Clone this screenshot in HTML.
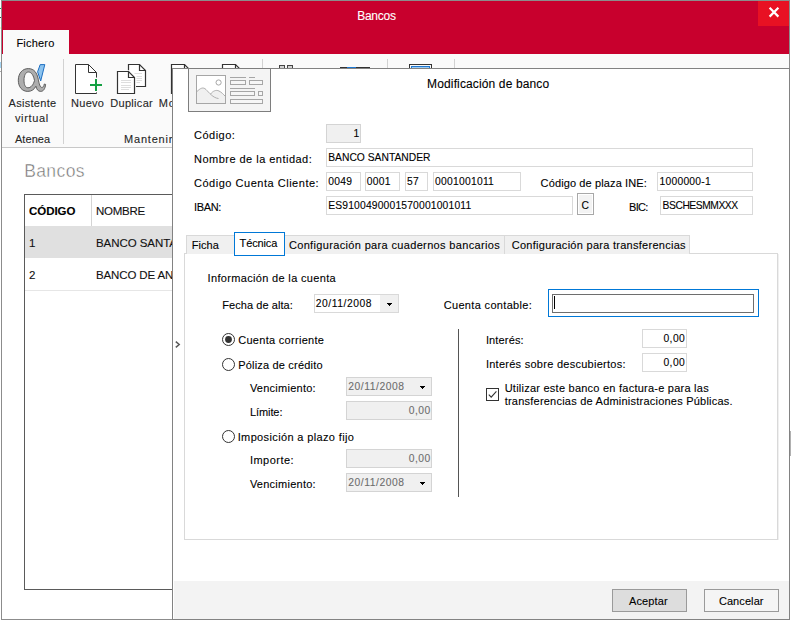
<!DOCTYPE html>
<html lang="es">
<head>
<meta charset="utf-8">
<title>Bancos</title>
<style>
html,body{margin:0;padding:0;}
body{width:791px;height:621px;overflow:hidden;background:#fff;position:relative;font-family:"Liberation Sans",sans-serif;}
.a{position:absolute;box-sizing:border-box;}
.t{position:absolute;white-space:nowrap;line-height:16px;font-family:"Liberation Sans",sans-serif;-webkit-text-stroke:0.1px currentColor;}
.f{position:absolute;box-sizing:border-box;border:1px solid #d9d9d9;background:#fff;}
.fd{position:absolute;box-sizing:border-box;border:1px solid #d4d4d4;background:#f0f0f0;}
.vs{position:absolute;width:1px;background:#d2d2d2;}
svg{position:absolute;overflow:visible;}
</style>
</head>
<body>
<!-- ===== main window ===== -->
<div class="a" id="frame" style="left:1px;top:0;width:789px;height:620px;border:1px solid #8c8c8c;"></div>
<div class="a" style="left:0;top:8px;width:1px;height:1px;background:#12a455;"></div>
<div class="a" style="left:0;top:17px;width:1px;height:1px;background:#444;"></div>
<div class="a" style="left:0;top:27px;width:1px;height:2px;background:#fbf3c4;"></div>
<div class="a" style="left:0;top:62px;width:1px;height:6px;background:#a6d6f4;"></div>
<div class="a" style="left:0;top:71px;width:1px;height:1px;background:#aaa;"></div>
<div class="a" id="titlebar" style="left:2px;top:1px;width:787px;height:53px;background:#c8002d;"></div>
<div class="a" id="closebtn" style="left:758px;top:1px;width:31px;height:25px;background:#e81123;"></div>
<svg style="left:758px;top:1px" width="31" height="25" viewBox="0 0 31 25"><path d="M11.6 6.8 L20.4 15.6 M20.4 6.8 L11.6 15.6" stroke="#fff" stroke-width="2.2" fill="none"/></svg>
<div class="a" id="ribbontab" style="left:3px;top:30px;width:66px;height:25px;background:#fafafa;"></div>
<div class="a" id="ribbon" style="left:2px;top:54px;width:787px;height:93px;background:#fafafa;"></div>
<div class="a" style="left:2px;top:147px;width:787px;height:1px;background:#c8c8c8;"></div>
<div class="vs" style="left:63px;top:59px;height:85px;"></div>
<div class="vs" style="left:262px;top:59px;height:85px;"></div>
<div class="vs" style="left:387px;top:59px;height:85px;"></div>
<div class="vs" style="left:454px;top:59px;height:85px;"></div>

<!-- ribbon icons -->
<svg id="ic-alpha" style="left:8px;top:56px" width="50" height="42" viewBox="8 56 50 42">
  <path d="M40.2 64.6 L44.8 64.6 L40.7 81.0 L37.6 71.8 Z" fill="#8cc3ee" stroke="#1e6fc2" stroke-width="1" stroke-linejoin="round"/>
  <path fill-rule="evenodd" fill="#adadad" stroke="#5e5e5e" stroke-width="1" stroke-linejoin="round"
   d="M28.3 68.6 C34.2 68.6 37.0 72.8 38.3 79.3 C39.1 83.6 40.0 87.4 41.8 87.4 C43.3 87.4 44.0 86.0 44.3 84.0 L45.6 84.4 C45.2 88.5 43.6 91.4 40.7 91.4 C37.9 91.4 36.6 89.2 35.9 86.2 C34.3 89.4 31.6 91.4 27.8 91.4 C22.1 91.4 18.3 86.9 18.3 80.2 C18.3 73.4 22.4 68.6 28.3 68.6 Z
      M28.4 72.0 C25.6 72.0 24.0 75.6 24.0 80.2 C24.0 84.8 25.4 87.8 28.0 87.8 C31.0 87.8 33.4 84.6 34.5 80.6 C33.7 75.8 31.6 72.0 28.4 72.0 Z"/>
</svg>
<svg id="ic-nuevo" style="left:70px;top:60px" width="40" height="40" viewBox="70 60 40 40">
  <path d="M75.5 64.5 H88.5 L96.5 72.5 V93.5 H75.5 Z" fill="#fff" stroke="#333" stroke-width="1"/>
  <path d="M88.5 64.5 V72.5 H96.5" fill="none" stroke="#333" stroke-width="1"/>
  <path d="M96 77.6 V92.4" stroke="#fcfcfc" stroke-width="3.4" fill="none"/>
  <path d="M96 79 V91 M90 85 H102" stroke="#14a042" stroke-width="2" fill="none"/>
</svg>
<svg id="ic-dup" style="left:112px;top:60px" width="40" height="40" viewBox="112 60 40 40">
  <path d="M128.5 64.5 H139.5 L145.5 70.5 V86.5 H128.5 Z" fill="#fff" stroke="none"/>
  <path d="M128.5 70.5 V64.5 H139.5 L145.5 70.5 V86.5 H136" fill="none" stroke="#333" stroke-width="1.2"/>
  <path d="M139.5 64.5 V70.5 H145.5" fill="none" stroke="#333" stroke-width="1.2"/>
  <path d="M134.5 73.5 H142 M136.5 76.5 H142 M136.5 78.5 H142 M136.5 80.5 H142 M136.5 82.5 H140" stroke="#dedede" stroke-width="1"/>
  <path d="M116.5 70.5 H129 L135.5 77 V94.5 H116.5 Z" fill="#fafafa" stroke="none"/>
  <path d="M117.5 71.5 H128.5 L134.5 77.5 V93.5 H117.5 Z" fill="#fff" stroke="#333" stroke-width="1.2"/>
  <path d="M128.5 71.5 V77.5 H134.5" fill="none" stroke="#333" stroke-width="1.2"/>
  <path d="M121 80.5 H131 M121 82.5 H131 M121 85.5 H131 M121 87.5 H131 M121 89.5 H129" stroke="#dedede" stroke-width="1"/>
</svg>
<svg id="ic-peek" style="left:165px;top:60px" width="300" height="40" viewBox="165 60 300 40">
  <!-- Modificar doc -->
  <path d="M171.5 64.5 H184.5 L191.5 71.5 V93.5 H171.5 Z" fill="#fff" stroke="#333" stroke-width="1.2"/>
  <path d="M184.5 64.5 V71.5 H191.5" fill="none" stroke="#333" stroke-width="1.2"/>
  <!-- Eliminar doc -->
  <path d="M222.5 64.5 H235.5 L242.5 71.5 V93.5 H222.5 Z" fill="#fff" stroke="#333" stroke-width="1.2"/>
  <path d="M235.5 64.5 V71.5 H242.5" fill="none" stroke="#333" stroke-width="1.2"/>
  <!-- two squares -->
  <rect x="279.5" y="65.5" width="5" height="6" fill="#d2d2d2" stroke="#444" stroke-width="1"/>
  <rect x="287.5" y="65.5" width="5" height="6" fill="#d2d2d2" stroke="#444" stroke-width="1"/>
  <!-- line with blue segment -->
  <path d="M340 67.5 H370" stroke="#333" stroke-width="1"/>
  <path d="M347 67.5 H356" stroke="#1e78d2" stroke-width="1"/>
  <!-- blue screen icon -->
  <rect x="409.5" y="64.5" width="22" height="14" fill="#fafafa" stroke="#333" stroke-width="1"/>
  <rect x="411.5" y="66.5" width="18" height="10" fill="#9ccbf2" stroke="#1e78d2" stroke-width="1"/>
</svg>

<!-- page content -->
<div class="a" id="grid" style="left:24px;top:194px;width:700px;height:396px;border:1px solid #5a5a5a;background:#fff;"></div>
<div class="a" style="left:91px;top:195px;width:1px;height:31px;background:#d4d4d4;"></div>
<div class="a" style="left:25px;top:226px;width:698px;height:32px;background:#e0e0e0;"></div>
<div class="a" style="left:25px;top:290px;width:698px;height:1px;background:#e6e6e6;"></div>
<span class="t" style="left:357.20px;top:7.84px;font-size:12px;color:#fff;letter-spacing:-0.255px;">Bancos</span>
<span class="t" style="left:16.40px;top:35.19px;font-size:11px;color:#000;letter-spacing:0.216px;">Fichero</span>
<span class="t" style="left:8.50px;top:95.19px;font-size:11px;color:#262626;letter-spacing:0.294px;">Asistente</span>
<span class="t" style="left:14.90px;top:110.19px;font-size:11px;color:#262626;letter-spacing:0.651px;">virtual</span>
<span class="t" style="left:14.90px;top:131.19px;font-size:11px;color:#262626;letter-spacing:0.088px;">Atenea</span>
<span class="t" style="left:71.10px;top:95.19px;font-size:11px;color:#262626;letter-spacing:0.241px;">Nuevo</span>
<span class="t" style="left:110.20px;top:95.19px;font-size:11px;color:#262626;letter-spacing:0.318px;">Duplicar</span>
<span class="t" style="left:158.70px;top:95.19px;font-size:11px;color:#262626;letter-spacing:0.931px;">Modificar</span>
<span class="t" style="left:124.10px;top:131.19px;font-size:11px;color:#262626;letter-spacing:0.773px;">Mantenimiento</span>
<span class="t" style="left:24.19px;top:162.94px;font-size:17.5px;color:#6e6e6e;letter-spacing:0.391px;-webkit-text-stroke:0.45px #fff;">Bancos</span>
<span class="t" style="left:28.90px;top:203.02px;font-size:11.5px;color:#000;letter-spacing:-0.007px;font-weight:bold;">CÓDIGO</span>
<span class="t" style="left:96.00px;top:203.02px;font-size:11.5px;color:#111;letter-spacing:-0.264px;">NOMBRE</span>
<span class="t" style="left:28.90px;top:235.02px;font-size:11.5px;color:#111;">1</span>
<span class="t" style="left:96.00px;top:235.02px;font-size:11.5px;color:#111;letter-spacing:-0.065px;">BANCO SANTANDER</span>
<span class="t" style="left:28.90px;top:267.02px;font-size:11.5px;color:#111;">2</span>
<span class="t" style="left:96.00px;top:267.02px;font-size:11.5px;color:#111;letter-spacing:-0.125px;">BANCO DE ANDALUCÍA</span>

<!-- ===== dialog ===== -->
<div class="a" id="dialog" style="left:172px;top:68px;width:618px;height:552px;border:1px solid #828282;background:#fff;"></div>
<div class="a" id="footer" style="left:174px;top:581px;width:615px;height:38px;background:#f3f3f3;"></div>
<div class="a" style="left:790px;top:431px;width:1px;height:25px;background:#b0b0b0;"></div>

<!-- icon panel -->
<div class="a" id="iconpanel" style="left:188px;top:68px;width:83px;height:44px;border:1px solid #7e7e7e;background:#f4f4f4;"></div>
<svg id="ic-panel" style="left:188px;top:68px" width="83" height="44" viewBox="188 68 83 44">
  <rect x="196.5" y="75.5" width="29" height="28" fill="#fff" stroke="#a6a6a6" stroke-width="1"/>
  <path d="M197 91.5 C200 88.5 203 86.5 206 89.5 C209 92.5 212 97.5 216 97.5 L225 97.5 L225 103 L197 103 Z" fill="#f0f0f0" stroke="none"/>
  <path d="M210 94.5 C213 91 216 89.5 219 91 C221.5 92.2 223.5 94.5 225 96 L225 103 L214 103 Z" fill="#f0f0f0" stroke="none"/>
  <path d="M197 91.5 C200 88.5 203 86.5 206 89.5 C209 92.5 213 98 218.5 98.5" fill="none" stroke="#a6a6a6" stroke-width="0.9"/>
  <path d="M210.5 94 C213 91 216 89.5 219 91 C221.5 92.2 223.5 94.5 225 96" fill="none" stroke="#a6a6a6" stroke-width="0.9"/>
  <circle cx="218.6" cy="82.5" r="2.6" fill="#fff" stroke="#a6a6a6" stroke-width="1"/>
  <path d="M230 77.5 H246 M249 77.5 H255 M230 88.5 H255" stroke="#a6a6a6" stroke-width="1"/>
  <rect x="230.5" y="80.5" width="15" height="4" fill="#f6f6f6" stroke="#a6a6a6" stroke-width="1"/>
  <rect x="249.5" y="80.5" width="13" height="4" fill="#f6f6f6" stroke="#a6a6a6" stroke-width="1"/>
  <rect x="230.5" y="91.5" width="24" height="4" fill="#f6f6f6" stroke="#a6a6a6" stroke-width="1"/>
  <rect x="258.5" y="91.5" width="4" height="4" fill="#f6f6f6" stroke="#a6a6a6" stroke-width="1"/>
  <rect x="230.5" y="99.5" width="32" height="4" fill="#f6f6f6" stroke="#a6a6a6" stroke-width="1"/>
</svg>

<!-- header fields -->
<div class="fd" style="left:326px;top:124px;width:35px;height:19px;"></div>
<div class="f" style="left:326px;top:148px;width:427px;height:19px;"></div>
<div class="f" style="left:326px;top:172px;width:35px;height:19px;"></div>
<div class="f" style="left:365px;top:172px;width:35px;height:19px;"></div>
<div class="f" style="left:405px;top:172px;width:23px;height:19px;"></div>
<div class="f" style="left:433px;top:172px;width:88px;height:19px;"></div>
<div class="f" style="left:657px;top:172px;width:96px;height:19px;"></div>
<div class="f" style="left:326px;top:196px;width:247px;height:19px;"></div>
<div class="a" id="btnC" style="left:577px;top:193px;width:17px;height:22px;border:1px solid #a8a8a8;background:#f3f3f3;box-shadow:inset 0 0 0 1px #fff;"></div>
<div class="f" style="left:660px;top:196px;width:93px;height:19px;"></div>

<!-- tabs -->
<div class="a" id="pane" style="left:184px;top:253px;width:594px;height:287px;border:1px solid #d9d9d9;background:#fff;"></div>
<div class="a" style="left:778px;top:254px;width:1px;height:286px;background:#f0f0f0;"></div>
<div class="a" id="tab1" style="left:186px;top:235px;width:49px;height:19px;border:1px solid #d9d9d9;border-bottom:none;background:#f0f0f0;"></div>
<div class="a" id="tab3" style="left:284px;top:235px;width:221px;height:19px;border:1px solid #d9d9d9;border-bottom:none;background:#f0f0f0;"></div>
<div class="a" id="tab4" style="left:504px;top:235px;width:186px;height:19px;border:1px solid #d9d9d9;border-bottom:none;background:#f0f0f0;"></div>
<div class="a" id="tab2" style="left:234px;top:232px;width:51px;height:24px;border:1px solid #0078d7;background:#fff;"></div>

<!-- chevron at left of pane -->
<svg style="left:174px;top:338px" width="8" height="12" viewBox="0 0 8 12"><path d="M1.8 3.6 L5.2 6.5 L1.8 9.4" fill="none" stroke="#5a5a5a" stroke-width="1.5"/></svg>

<!-- pane controls -->
<div class="f" style="left:314px;top:294px;width:85px;height:19px;"></div>
<div class="a" style="left:380px;top:295px;width:18px;height:17px;background:#f0f0f0;"></div>
<svg style="left:387px;top:303px" width="5" height="3" viewBox="0 0 5 3" shape-rendering="crispEdges"><path d="M0 0 H5 V1 H4 V2 H3 V3 H2 V2 H1 V1 H0 Z" fill="#000"/></svg>

<div class="a" id="focus" style="left:548px;top:289px;width:211px;height:28px;border:1px solid #0078d7;background:#fff;"></div>
<div class="a" id="ctafield" style="left:552px;top:294px;width:202px;height:19px;border:1px solid #6e6e6e;background:#fff;"></div>
<div class="a" style="left:554px;top:296px;width:1px;height:13px;background:#000;"></div>

<!-- radios -->
<svg style="left:221px;top:332px" width="15" height="15" viewBox="0 0 15 15"><circle cx="7.5" cy="7.5" r="6" fill="#fff" stroke="#333" stroke-width="1"/><circle cx="7.5" cy="7.5" r="3.4" fill="#333"/></svg>
<svg style="left:221px;top:357px" width="15" height="15" viewBox="0 0 15 15"><circle cx="7.5" cy="7.5" r="6" fill="#fff" stroke="#333" stroke-width="1"/></svg>
<svg style="left:221px;top:429px" width="15" height="15" viewBox="0 0 15 15"><circle cx="7.5" cy="7.5" r="6" fill="#fff" stroke="#333" stroke-width="1"/></svg>

<!-- disabled sub-fields -->
<div class="fd" style="left:346px;top:377px;width:86px;height:19px;"></div>
<svg style="left:420px;top:386px" width="5" height="3" viewBox="0 0 5 3" shape-rendering="crispEdges"><path d="M0 0 H5 V1 H4 V2 H3 V3 H2 V2 H1 V1 H0 Z" fill="#000"/></svg>
<div class="fd" style="left:346px;top:401px;width:86px;height:19px;"></div>
<div class="fd" style="left:346px;top:449px;width:86px;height:19px;"></div>
<div class="fd" style="left:346px;top:473px;width:86px;height:19px;"></div>
<svg style="left:420px;top:482px" width="5" height="3" viewBox="0 0 5 3" shape-rendering="crispEdges"><path d="M0 0 H5 V1 H4 V2 H3 V3 H2 V2 H1 V1 H0 Z" fill="#000"/></svg>

<!-- vertical divider -->
<div class="a" style="left:458px;top:329px;width:1px;height:168px;background:#555;"></div>

<!-- right column -->
<div class="f" style="left:642px;top:329px;width:45px;height:19px;"></div>
<div class="f" style="left:642px;top:353px;width:45px;height:19px;"></div>
<svg style="left:486px;top:388px" width="13" height="13" viewBox="0 0 13 13"><rect x="0.5" y="0.5" width="12" height="12" fill="#fff" stroke="#333" stroke-width="1"/><path d="M2.8 6.6 L5.2 9.2 L10.4 3.4" fill="none" stroke="#333" stroke-width="1.1"/></svg>

<!-- buttons -->
<div class="a" id="btnOk" style="left:612px;top:589px;width:75px;height:23px;border:1px solid #9a9a9a;background:#dddddd;"></div>
<div class="a" id="btnCancel" style="left:704px;top:589px;width:75px;height:23px;border:1px solid #9a9a9a;background:#f5f5f5;"></div>
<span class="t" style="left:427.10px;top:75.84px;font-size:12px;color:#000;letter-spacing:0.132px;">Modificación de banco</span>
<span class="t" style="left:194.00px;top:127.19px;font-size:11px;color:#000;letter-spacing:0.491px;">Código:</span>
<span class="t" style="left:194.00px;top:151.19px;font-size:11px;color:#000;letter-spacing:0.474px;">Nombre de la entidad:</span>
<span class="t" style="left:194.00px;top:175.19px;font-size:11px;color:#000;letter-spacing:0.520px;">Código Cuenta Cliente:</span>
<span class="t" style="left:194.00px;top:199.19px;font-size:11px;color:#000;letter-spacing:-0.347px;">IBAN:</span>
<span class="t" style="left:353.40px;top:126.43px;font-size:10.3px;color:#000;">1</span>
<span class="t" style="left:328.20px;top:150.43px;font-size:10.3px;color:#000;letter-spacing:0.011px;">BANCO SANTANDER</span>
<span class="t" style="left:328.20px;top:174.43px;font-size:10.3px;color:#000;letter-spacing:0.295px;">0049</span>
<span class="t" style="left:366.80px;top:174.43px;font-size:10.3px;color:#000;letter-spacing:0.220px;">0001</span>
<span class="t" style="left:407.10px;top:174.43px;font-size:10.3px;color:#000;letter-spacing:0.166px;">57</span>
<span class="t" style="left:435.00px;top:174.43px;font-size:10.3px;color:#000;letter-spacing:0.258px;">0001001011</span>
<span class="t" style="left:328.20px;top:198.43px;font-size:10.3px;color:#000;letter-spacing:0.176px;">ES9100490001570001001011</span>
<span class="t" style="left:540.60px;top:175.19px;font-size:11px;color:#000;letter-spacing:0.122px;">Código de plaza INE:</span>
<span class="t" style="left:659.60px;top:174.43px;font-size:10.3px;color:#000;letter-spacing:0.228px;">1000000-1</span>
<span class="t" style="left:581.40px;top:198.43px;font-size:10.3px;color:#000;">C</span>
<span class="t" style="left:629.10px;top:199.19px;font-size:11px;color:#000;letter-spacing:-0.727px;">BIC:</span>
<span class="t" style="left:662.60px;top:198.43px;font-size:10.3px;color:#000;letter-spacing:-0.461px;">BSCHESMMXXX</span>
<span class="t" style="left:191.80px;top:237.19px;font-size:11px;color:#000;letter-spacing:0.019px;">Ficha</span>
<span class="t" style="left:239.60px;top:235.19px;font-size:11px;color:#000;letter-spacing:-0.133px;">Técnica</span>
<span class="t" style="left:288.90px;top:237.19px;font-size:11px;color:#000;letter-spacing:0.344px;">Configuración para cuadernos bancarios</span>
<span class="t" style="left:511.70px;top:237.19px;font-size:11px;color:#000;letter-spacing:0.276px;">Configuración para transferencias</span>
<span class="t" style="left:207.60px;top:270.19px;font-size:11px;color:#000;letter-spacing:0.330px;">Información de la cuenta</span>
<span class="t" style="left:222.20px;top:297.19px;font-size:11px;color:#000;letter-spacing:0.070px;">Fecha de alta:</span>
<span class="t" style="left:315.80px;top:296.43px;font-size:10.3px;color:#000;letter-spacing:0.542px;">20/11/2008</span>
<span class="t" style="left:443.70px;top:297.19px;font-size:11px;color:#000;letter-spacing:0.333px;">Cuenta contable:</span>
<span class="t" style="left:238.20px;top:332.19px;font-size:11px;color:#000;letter-spacing:0.298px;">Cuenta corriente</span>
<span class="t" style="left:238.20px;top:357.19px;font-size:11px;color:#000;letter-spacing:0.187px;">Póliza de crédito</span>
<span class="t" style="left:249.90px;top:380.19px;font-size:11px;color:#000;letter-spacing:0.251px;">Vencimiento:</span>
<span class="t" style="left:348.20px;top:379.43px;font-size:10.3px;color:#6d6d6d;letter-spacing:0.562px;">20/11/2008</span>
<span class="t" style="left:249.90px;top:404.19px;font-size:11px;color:#000;letter-spacing:-0.074px;">Límite:</span>
<span class="t" style="left:408.70px;top:403.43px;font-size:10.3px;color:#6d6d6d;letter-spacing:0.463px;">0,00</span>
<span class="t" style="left:237.70px;top:429.19px;font-size:11px;color:#000;letter-spacing:0.364px;">Imposición a plazo fijo</span>
<span class="t" style="left:249.90px;top:452.19px;font-size:11px;color:#000;letter-spacing:0.478px;">Importe:</span>
<span class="t" style="left:408.70px;top:451.43px;font-size:10.3px;color:#6d6d6d;letter-spacing:0.463px;">0,00</span>
<span class="t" style="left:249.90px;top:476.19px;font-size:11px;color:#000;letter-spacing:0.251px;">Vencimiento:</span>
<span class="t" style="left:348.20px;top:475.43px;font-size:10.3px;color:#6d6d6d;letter-spacing:0.562px;">20/11/2008</span>
<span class="t" style="left:485.90px;top:332.19px;font-size:11px;color:#000;letter-spacing:0.152px;">Interés:</span>
<span class="t" style="left:663.40px;top:331.43px;font-size:10.3px;color:#000;letter-spacing:0.463px;">0,00</span>
<span class="t" style="left:485.90px;top:356.19px;font-size:11px;color:#000;letter-spacing:0.267px;">Interés sobre descubiertos:</span>
<span class="t" style="left:663.40px;top:355.43px;font-size:10.3px;color:#000;letter-spacing:0.463px;">0,00</span>
<span class="t" style="left:504.70px;top:380.19px;font-size:11px;color:#000;letter-spacing:0.238px;">Utilizar este banco en factura-e para las</span>
<span class="t" style="left:504.70px;top:393.19px;font-size:11px;color:#000;letter-spacing:0.225px;">transferencias de Administraciones Públicas.</span>
<span class="t" style="left:628.90px;top:593.19px;font-size:11px;color:#000;letter-spacing:0.160px;">Aceptar</span>
<span class="t" style="left:718.90px;top:593.19px;font-size:11px;color:#000;letter-spacing:0.084px;">Cancelar</span>
</body>
</html>
